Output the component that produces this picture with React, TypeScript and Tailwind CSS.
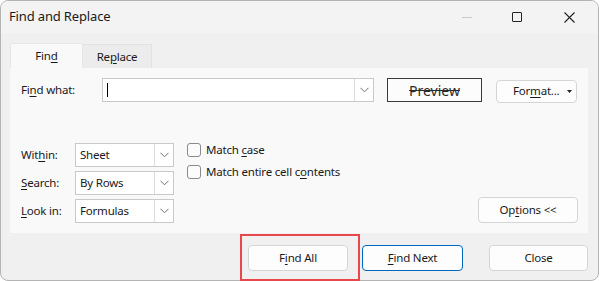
import React from "react";

const font = { fontFamily: '"Segoe UI", "Noto Sans", sans-serif' };

function U({ children }: { children: React.ReactNode }) {
  return <span className="underline underline-offset-2 decoration-[1px]">{children}</span>;
}

function Chevron() {
  return (
    <svg width="9" height="6" viewBox="0 0 9 6" className="text-[#707070]">
      <path d="M0.5 0.8 L4.5 4.8 L8.5 0.8" fill="none" stroke="currentColor" strokeWidth="1" />
    </svg>
  );
}

const txt = "text-[11.5px] tracking-[-0.2px] text-[#1a1a1a]";

function Select({ value }: { value: string }) {
  return (
    <div className="flex h-[24px] w-[99px] border border-[#c9c9c9] bg-white">
      <div className={`flex flex-1 items-center pl-[4px] ${txt}`}>{value}</div>
      <div className="flex w-[19px] items-center justify-center border-l border-[#dcdcdc]">
        <Chevron />
      </div>
    </div>
  );
}

function Checkbox({ children }: { children: React.ReactNode }) {
  return (
    <div className="flex h-[16px] items-center gap-[5px]">
      <div className="h-[14px] w-[14px] rounded-[3px] border border-[#8a8a8a] bg-[#fbfbfb]" />
      <span className={`${txt} leading-[16px]`}>{children}</span>
    </div>
  );
}

function Btn({ children, w, blue }: { children: React.ReactNode; w: string; blue?: boolean }) {
  return (
    <div
      className={`flex h-[26px] items-center justify-center rounded-[4px] border bg-[#fdfdfd] ${txt} ${w} ${
        blue ? "border-[#0067c0]" : "border-[#d5d5d5]"
      }`}
    >
      {children}
    </div>
  );
}

export default function App() {
  return (
    <div className="relative h-[281px] w-[600px] bg-white" style={font}>
      <div className="flex h-[281px] w-[599px] flex-col overflow-hidden rounded-[8px] border border-[#b4b4b4] bg-[#f0f0f0]">
        {/* title bar */}
        <div className="flex h-[32px] items-center justify-between bg-[#f3f3f3] pl-[8px]">
          <span className="text-[13px] tracking-[-0.15px] text-[#1a1a1a]">Find and Replace</span>
          <div className="flex h-full items-center">
            <div className="flex w-[46px] justify-center">
              <div className="h-px w-[10px] bg-[#c8c8c8]" />
            </div>
            <div className="flex w-[54px] justify-center">
              <div className="h-[10px] w-[10px] rounded-[1px] border border-[#222]" />
            </div>
            <div className="flex w-[54px] justify-center pr-[4px]">
              <svg width="11" height="11" viewBox="0 0 11 11">
                <path d="M0.5 0.5 L10.5 10.5 M10.5 0.5 L0.5 10.5" stroke="#222" strokeWidth="1.1" />
              </svg>
            </div>
          </div>
        </div>

        {/* body */}
        <div className="flex flex-1 flex-col pl-[9px] pr-[10px] pt-[10px]">
          {/* tabs */}
          <div className="flex h-[25px] items-end">
            <div className={`flex h-[25px] w-[73px] items-center justify-center rounded-t-[2px] border border-b-0 border-[#e6e6e6] bg-[#f9f9f9] ${txt}`}>
              Fin<U>d</U>
            </div>
            <div className={`flex h-[24px] w-[69px] items-center justify-center border border-b-0 border-l-0 border-[#e2e2e2] bg-[#ececec] ${txt}`}>
              Re<U>p</U>lace
            </div>
          </div>

          {/* panel */}
          <div className="flex h-[165px] w-[578px] flex-col bg-[#f9f9f9] pb-[10px] pl-[11px] pr-[10px] pt-[10px]">
            <div className="flex h-[24px] items-center">
              <span className={`w-[81px] ${txt}`}>
                Fi<U>n</U>d what:
              </span>
              <div className="flex h-[24px] w-[272px] border border-[#c9c9c9] bg-white">
                <div className="flex flex-1 items-center pl-[4px]">
                  <div className="h-[14px] w-px bg-black" />
                </div>
                <div className="flex w-[19px] items-center justify-center border-l border-[#dcdcdc]">
                  <Chevron />
                </div>
              </div>
              <div className="ml-[13px] flex h-[24px] w-[95px] items-center justify-center border border-[#3a3a3a] bg-[#fcfcfc] text-[14px] text-[#2a2a2a] line-through">
                Preview
              </div>
              <div className={`ml-[14px] mt-[2px] flex h-[23px] w-[81px] items-center rounded-[4px] border border-[#d5d5d5] bg-[#fdfdfd] ${txt}`}>
                <span className="flex-1 pl-[16px]">
                  For<U>m</U>at...
                </span>
                <svg width="5" height="3" viewBox="0 0 5 3" className="mr-[4px]">
                  <path d="M0 0 L5 0 L2.5 3 Z" fill="#222" />
                </svg>
              </div>
            </div>

            <div className="mt-[39px] flex flex-1 items-end">
              <div className="flex flex-col gap-[4px]">
                {[
                  [<>Wit<U>h</U>in:</>, "Sheet"],
                  [<><U>S</U>earch:</>, "By Rows"],
                  [<><U>L</U>ook in:</>, "Formulas"],
                ].map(([l, v], i) => (
                  <div key={i} className="flex items-center">
                    <span className={`w-[54px] ${txt}`}>{l}</span>
                    <Select value={v as string} />
                  </div>
                ))}
              </div>
              <div className="ml-[13px] flex flex-col gap-[6px] self-start pt-[1px]">
                <Checkbox>
                  Match <U>c</U>ase
                </Checkbox>
                <Checkbox>
                  Match entire cell c<U>o</U>ntents
                </Checkbox>
              </div>
              <div className="flex-1" />
              <div className={`flex h-[26px] w-[100px] items-center justify-center rounded-[4px] border border-[#d5d5d5] bg-[#fdfdfd] ${txt}`}>
                Op<U>t</U>ions &lt;&lt;
              </div>
            </div>
          </div>

          {/* buttons */}
          <div className="flex justify-end pt-[12px]">
            <Btn w="w-[100px]">
              F<U>i</U>nd All
            </Btn>
            <div className="w-[14px]" />
            <Btn w="w-[101px]" blue>
              <U>F</U>ind Next
            </Btn>
            <div className="w-[26px]" />
            <Btn w="w-[99px]">Close</Btn>
          </div>
        </div>
      </div>
      {/* highlight annotation */}
      <div className="absolute left-[240px] top-[234px] h-[47px] w-[120px] border-2 border-[#e8474c]" />
    </div>
  );
}
